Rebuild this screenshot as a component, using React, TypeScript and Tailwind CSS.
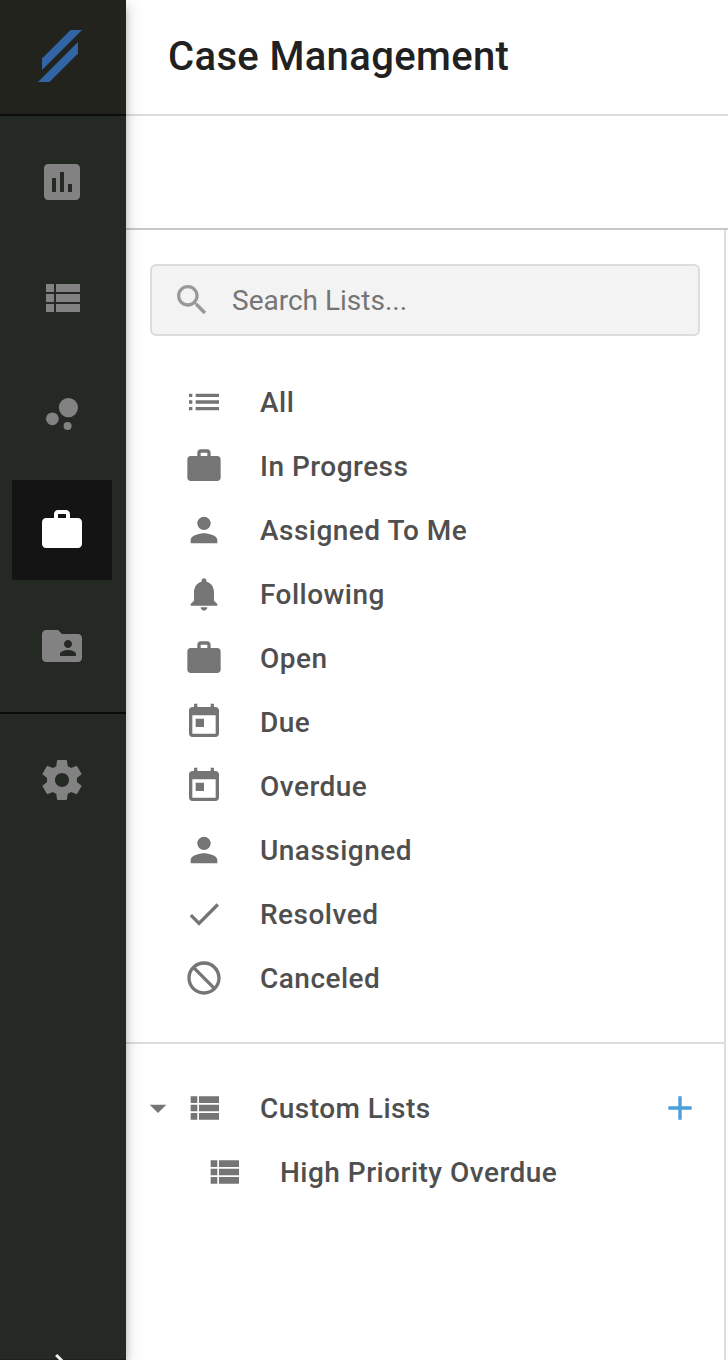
import React from 'react';

interface IconProps {
  path: string;
  className?: string;
}

interface ListItem {
  label: string;
  icon: string;
}

const ICONS = {
  chart: 'M19 3H5c-1.1 0-2 .9-2 2v14c0 1.1.9 2 2 2h14c1.1 0 2-.9 2-2V5c0-1.1-.9-2-2-2zM9 17H7v-7h2v7zm4 0h-2V7h2v10zm4 0h-2v-4h2v4z',
  viewList: 'M4 14h4v-4H4v4zm0 5h4v-4H4v4zM4 9h4V5H4v4zm5 5h12v-4H9v4zm0 5h12v-4H9v4zM9 5v4h12V5H9z',
  bubbles: 'M4 14.4a3.2 3.2 0 1 0 6.4 0a3.2 3.2 0 1 0-6.4 0zM12.8 18a2 2 0 1 0 4 0a2 2 0 1 0-4 0zM10.4 8.8a4.8 4.8 0 1 0 9.6 0a4.8 4.8 0 1 0-9.6 0z',
  work: 'M20 6h-4V4c0-1.11-.89-2-2-2h-4c-1.11 0-2 .89-2 2v2H4c-1.11 0-1.99.89-1.99 2L2 19c0 1.11.89 2 2 2h16c1.11 0 2-.89 2-2V8c0-1.11-.89-2-2-2zm-6 0h-4V4h4v2z',
  folderShared: 'M20 6h-8l-2-2H4c-1.1 0-1.99.9-1.99 2L2 18c0 1.1.9 2 2 2h16c1.1 0 2-.9 2-2V8c0-1.1-.9-2-2-2zm-5 3c1.1 0 2 .9 2 2s-.9 2-2 2-2-.9-2-2 .9-2 2-2zm4 8h-8v-1c0-1.33 2.67-2 4-2s4 .67 4 2v1z',
  settings: 'M19.43 12.98c.04-.32.07-.64.07-.98s-.03-.66-.07-.98l2.11-1.65c.19-.15.24-.42.12-.64l-2-3.46c-.12-.22-.39-.3-.61-.22l-2.49 1c-.52-.4-1.08-.73-1.69-.98l-.38-2.65C14.46 2.18 14.25 2 14 2h-4c-.25 0-.46.18-.49.42l-.38 2.65c-.61.25-1.17.59-1.69.98l-2.49-1c-.23-.09-.49 0-.61.22l-2 3.46c-.13.22-.07.49.12.64l2.11 1.65c-.04.32-.07.65-.07.98s.03.66.07.98l-2.11 1.65c-.19.15-.24.42-.12.64l2 3.46c.12.22.39.3.61.22l2.49-1c.52.4 1.08.73 1.69.98l.38 2.65c.03.24.24.42.49.42h4c.25 0 .46-.18.49-.42l.38-2.65c.61-.25 1.17-.59 1.69-.98l2.49 1c.23.09.49 0 .61-.22l2-3.46c.12-.22.07-.49-.12-.64l-2.11-1.65zM12 15.5c-1.93 0-3.5-1.57-3.5-3.5s1.57-3.5 3.5-3.5 3.5 1.57 3.5 3.5-1.57 3.5-3.5 3.5z',
  search: 'M15.5 14h-.79l-.28-.27C15.41 12.59 16 11.11 16 9.5 16 5.91 13.09 3 9.5 3S3 5.91 3 9.5 5.91 16 9.5 16c1.61 0 3.09-.59 4.23-1.57l.27.28v.79l5 4.99L20.49 19l-4.99-5zm-6 0C7.01 14 5 11.99 5 9.5S7.01 5 9.5 5 14 7.01 14 9.5 11.99 14 9.5 14z',
  list: 'M3 13h2v-2H3v2zm0 4h2v-2H3v2zm0-8h2V7H3v2zm4 4h14v-2H7v2zm0 4h14v-2H7v2zM7 7v2h14V7H7z',
  person: 'M12 12c2.21 0 4-1.79 4-4s-1.79-4-4-4-4 1.79-4 4 1.79 4 4 4zm0 2c-2.67 0-8 1.34-8 4v2h16v-2c0-2.66-5.33-4-8-4z',
  bell: 'M12 22c1.1 0 2-.9 2-2h-4c0 1.1.89 2 2 2zm6-6v-5c0-3.07-1.64-5.64-4.5-6.32V4c0-.83-.67-1.5-1.5-1.5s-1.5.67-1.5 1.5v.68C7.63 5.36 6 7.92 6 11v5l-2 2v1h16v-1l-2-2z',
  today: 'M19 3h-1V1h-2v2H8V1H6v2H5c-1.11 0-1.99.9-1.99 2L3 19c0 1.1.89 2 2 2h14c1.1 0 2-.9 2-2V5c0-1.1-.9-2-2-2zm0 16H5V8h14v11zM7 10h5v5H7z',
  check: 'M9 16.17L4.83 12l-1.42 1.41L9 19 21 7l-1.41-1.41z',
  notInterested: 'M12 2C6.48 2 2 6.48 2 12s4.48 10 10 10 10-4.48 10-10S17.52 2 12 2zm0 18c-4.42 0-8-3.58-8-8 0-1.85.63-3.55 1.69-4.9L16.9 18.31C15.55 19.37 13.85 20 12 20zm6.31-3.1L7.1 5.69C8.45 4.63 10.15 4 12 4c4.42 0 8 3.58 8 8 0 1.85-.63 3.55-1.69 4.9z',
  caretDown: 'M7 10l5 5 5-5z',
  add: 'M19 13h-6v6h-2v-6H5v-2h6V5h2v6h6v2z',
};

const NAV = [
  { label: 'Dashboard', icon: ICONS.chart, active: false },
  { label: 'Lists', icon: ICONS.viewList, active: false },
  { label: 'Clusters', icon: ICONS.bubbles, active: false },
  { label: 'Cases', icon: ICONS.work, active: true },
  { label: 'Shared', icon: ICONS.folderShared, active: false },
];

const LISTS: ListItem[] = [
  { label: 'All', icon: ICONS.list },
  { label: 'In Progress', icon: ICONS.work },
  { label: 'Assigned To Me', icon: ICONS.person },
  { label: 'Following', icon: ICONS.bell },
  { label: 'Open', icon: ICONS.work },
  { label: 'Due', icon: ICONS.today },
  { label: 'Overdue', icon: ICONS.today },
  { label: 'Unassigned', icon: ICONS.person },
  { label: 'Resolved', icon: ICONS.check },
  { label: 'Canceled', icon: ICONS.notInterested },
];

const Icon: React.FC<IconProps> = ({ path, className = 'size-10' }) => (
  <svg viewBox="0 0 24 24" fill="currentColor" aria-hidden="true" className={`shrink-0 ${className}`}>
    <path d={path} />
  </svg>
);

const NavButton: React.FC<{ label: string; icon: string; active?: boolean }> = ({ label, icon, active }) => (
  <button
    aria-label={label}
    className={`size-[100px] flex items-center justify-center ${active ? 'bg-[#141414] text-white' : 'text-[#828282]'}`}
  >
    <Icon path={icon} className="size-12" />
  </button>
);

const Sidebar: React.FC = () => (
  <aside className="relative z-10 w-[126px] shrink-0 flex flex-col bg-[#252923] shadow-[0_4px_8px_-2px_rgba(0,0,0,0.2),0_8px_10px_0_rgba(0,0,0,0.14),0_2px_20px_0_rgba(0,0,0,0.12)]">
    <div className="h-[116px] shrink-0 border-b-2 border-[#0c0d0b] bg-[#21231c]">
      <svg viewBox="0 0 126 114" className="w-[126px] h-[114px]" fill="#3165a5">
        <path d="M70.5 30H82L42 70V58.5z" />
        <path d="M78 42V53.5L49.5 82H38z" />
      </svg>
    </div>

    <nav className="flex flex-col gap-4 py-4 pl-3 border-b-2 border-[#0a0a0a]">
      {NAV.map(item => (
        <NavButton key={item.label} {...item} />
      ))}
    </nav>

    <div className="py-4 pl-3">
      <NavButton label="Settings" icon={ICONS.settings} />
    </div>

    {/* Expand toggle, cut off by the fold */}
    <div className="mt-auto h-1.5 pl-[54px] overflow-hidden bg-linear-to-b from-[#252923] from-[84%] to-[#211c1d] to-[84%]">
      <svg viewBox="0 0 12 6" className="w-3 h-1.5" fill="none" stroke="#efefef" strokeWidth="3">
        <path d="M2.2 1L12.2 11" />
      </svg>
    </div>
  </aside>
);

const ListRow: React.FC<ListItem> = ({ label, icon }) => (
  <li className="h-16 flex items-center gap-9 pl-[58px] text-[#757575]">
    <Icon path={icon} />
    <span className="pt-0.5 text-[28px] font-medium tracking-[0.48px] text-[#4f4f4f]">{label}</span>
  </li>
);

export default function App() {
  return (
    <div className="w-[728px] h-[1360px] flex overflow-hidden bg-white font-[Roboto,sans-serif]">
      <Sidebar />

      <main className="flex-1 flex flex-col">
        <header className="h-[116px] shrink-0 flex items-center pl-[42px] border-b-2 border-[#dcdcdc]">
          <h1 className="text-[40px] font-medium tracking-[0.35px] text-[#212121]">Case Management</h1>
        </header>
        <div className="h-[114px] shrink-0 border-b-2 border-[#c8c8c8]" />

        <section className="flex-1 w-[600px] border-r-2 border-[#dcdcdc]">
          <div className="px-6 pt-[34px]">
            <label className="h-[72px] flex items-center gap-5 pl-5 rounded-md border-2 border-[#dcdcdc] bg-[#f3f3f3] text-[#999999]">
              <Icon path={ICONS.search} />
              <input
                type="text"
                placeholder="Search Lists..."
                className="flex-1 pt-0.5 text-[28px] outline-none placeholder:text-[#757575]"
              />
            </label>
          </div>

          <ul className="pt-[34px] pb-8 border-b-2 border-[#dcdcdc]">
            {LISTS.map(item => (
              <ListRow key={item.label} {...item} />
            ))}
          </ul>

          {/* Custom lists */}
          <div className="pt-8 text-[#757575]">
            <div className="h-16 flex items-center pl-3 pr-6">
              <Icon path={ICONS.caretDown} />
              <Icon path={ICONS.viewList} className="size-10 ml-1.5" />
              <span className="flex-1 ml-9 pt-0.5 text-[28px] font-medium tracking-[0.48px] text-[#4f4f4f]">Custom Lists</span>
              <button aria-label="Add list" className="text-[#4a9fdb]">
                <Icon path={ICONS.add} />
              </button>
            </div>
            <ul className="pl-5">
              <ListRow label="High Priority Overdue" icon={ICONS.viewList} />
            </ul>
          </div>
        </section>
      </main>
    </div>
  );
}
